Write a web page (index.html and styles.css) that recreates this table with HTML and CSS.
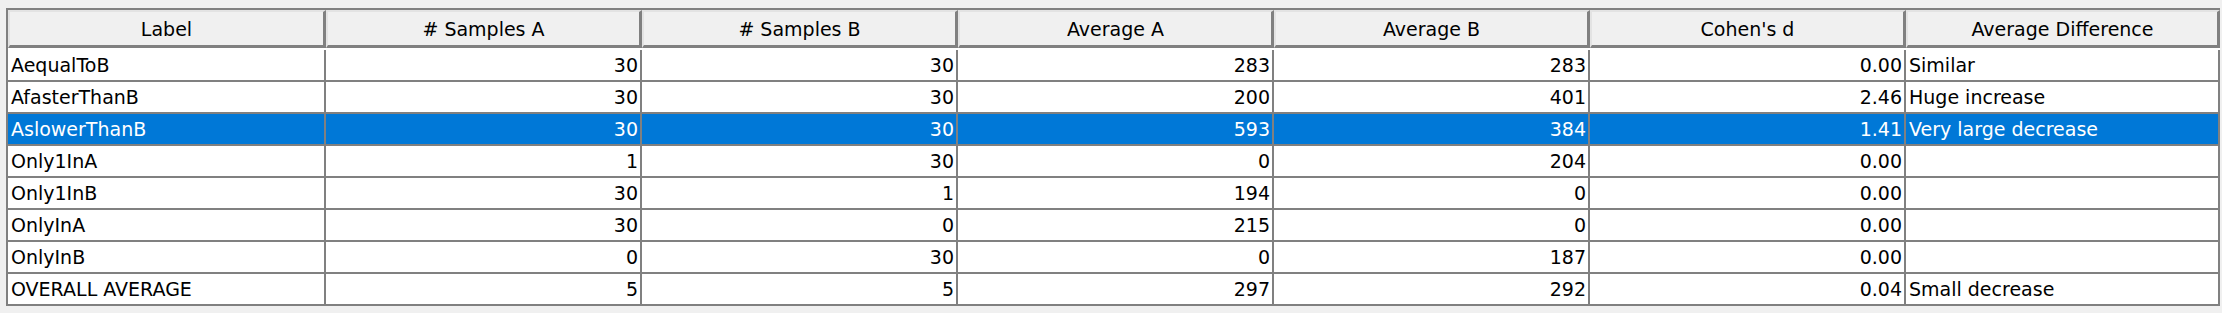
FILE: index.html
```html
<!DOCTYPE html>
<html>
<head>
<meta charset="utf-8">
<link rel="stylesheet" href="styles.css">
</head>
<body>
<div class="pane">
  <div class="header">
    <div class="hcell">Label</div>
    <div class="hcell"># Samples A</div>
    <div class="hcell"># Samples B</div>
    <div class="hcell">Average A</div>
    <div class="hcell">Average B</div>
    <div class="hcell">Cohen's d</div>
    <div class="hcell">Average Difference</div>
  </div>
  <div class="body">
    <div class="row">
      <div class="cell txt">AequalToB</div><div class="cell num">30</div><div class="cell num">30</div><div class="cell num">283</div><div class="cell num">283</div><div class="cell num">0.00</div><div class="cell txt">Similar</div>
    </div>
    <div class="row">
      <div class="cell txt">AfasterThanB</div><div class="cell num">30</div><div class="cell num">30</div><div class="cell num">200</div><div class="cell num">401</div><div class="cell num">2.46</div><div class="cell txt">Huge increase</div>
    </div>
    <div class="row selected">
      <div class="cell txt">AslowerThanB</div><div class="cell num">30</div><div class="cell num">30</div><div class="cell num">593</div><div class="cell num">384</div><div class="cell num">1.41</div><div class="cell txt">Very large decrease</div>
    </div>
    <div class="row">
      <div class="cell txt">Only1InA</div><div class="cell num">1</div><div class="cell num">30</div><div class="cell num">0</div><div class="cell num">204</div><div class="cell num">0.00</div><div class="cell txt"></div>
    </div>
    <div class="row">
      <div class="cell txt">Only1InB</div><div class="cell num">30</div><div class="cell num">1</div><div class="cell num">194</div><div class="cell num">0</div><div class="cell num">0.00</div><div class="cell txt"></div>
    </div>
    <div class="row">
      <div class="cell txt">OnlyInA</div><div class="cell num">30</div><div class="cell num">0</div><div class="cell num">215</div><div class="cell num">0</div><div class="cell num">0.00</div><div class="cell txt"></div>
    </div>
    <div class="row">
      <div class="cell txt">OnlyInB</div><div class="cell num">0</div><div class="cell num">30</div><div class="cell num">0</div><div class="cell num">187</div><div class="cell num">0.00</div><div class="cell txt"></div>
    </div>
    <div class="row">
      <div class="cell txt">OVERALL AVERAGE</div><div class="cell num">5</div><div class="cell num">5</div><div class="cell num">297</div><div class="cell num">292</div><div class="cell num">0.04</div><div class="cell txt">Small decrease</div>
    </div>
  </div>
</div>
</body>
</html>
```

FILE: styles.css
```css
html, body {
  margin: 0;
  padding: 0;
  background: #f0f0f0;
}
body {
  font-family: "DejaVu Sans", Verdana, sans-serif;
  font-size: 19px;
  color: #000;
}
.pane {
  margin: 8px 0 0 6px;
  width: 2212px;
  border-left: 2px solid #808080;
  border-top: 2px solid #808080;
}
.header {
  display: grid;
  grid-template-columns: 318px repeat(5, 316px) 314px;
  height: 38px;
}
.hcell {
  box-sizing: border-box;
  background: #f0f0f0;
  border-top: 2px solid #e3e3e3;
  border-left: 2px solid #e3e3e3;
  border-right: 3px solid #808080;
  border-bottom: 3px solid #808080;
  display: flex;
  align-items: center;
  justify-content: center;
  white-space: nowrap;
}
.body {
  background: #fff;
  padding-top: 2px;
}
.row {
  display: grid;
  grid-template-columns: 318px repeat(5, 316px) 314px;
  height: 32px;
}
.cell {
  box-sizing: border-box;
  border-right: 2px solid #808080;
  border-bottom: 2px solid #808080;
  display: flex;
  align-items: center;
  white-space: nowrap;
  overflow: hidden;
}
.txt {
  padding-left: 3px;
  justify-content: flex-start;
}
.num {
  padding-right: 2px;
  justify-content: flex-end;
}
.selected {
  background: #0078d7;
  color: #fff;
}
```
